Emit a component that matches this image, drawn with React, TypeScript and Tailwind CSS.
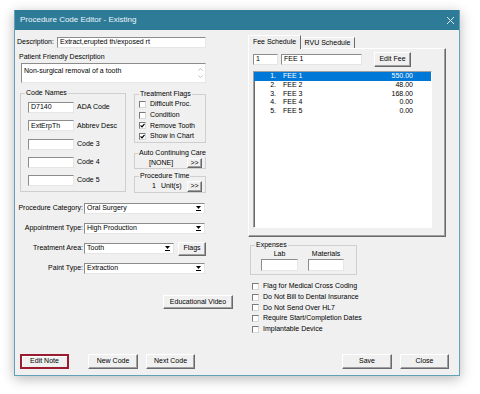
import React from "react";

const sunken =
  "bg-white border border-t-[#8c8c8c] border-l-[#8c8c8c] border-r-[#e6e6e6] border-b-[#e6e6e6]";
const raised =
  "bg-[#f0f0f0] border border-t-white border-l-white border-r-[#696969] border-b-[#696969] shadow-[inset_-1px_-1px_0_#a0a0a0]";

type Kids = { className?: string; children?: React.ReactNode };

function Field({ className = "", children }: Kids) {
  return (
    <div className={`${sunken} flex items-center pl-[2px] whitespace-nowrap overflow-hidden ${className}`}>
      {children}
    </div>
  );
}

function Btn({ className = "", children }: Kids) {
  return (
    <div className={`${raised} flex items-center justify-center whitespace-nowrap ${className}`}>
      {children}
    </div>
  );
}

function Select({ className = "", value }: { className?: string; value: string }) {
  return (
    <div className={`${sunken} h-[11px] flex items-center ${className}`}>
      <span className="flex-1 pl-[2px] whitespace-nowrap overflow-hidden">{value}</span>
      <span className="w-[9px] h-[9px] mr-[1px] flex flex-col items-center justify-center gap-[1px]">
        <svg width="5" height="3" viewBox="0 0 5 3">
          <path d="M0 0h5L2.5 3z" fill="#000" />
        </svg>
        <span className="w-[5px] h-px bg-black" />
      </span>
    </div>
  );
}

// group box: the caption sits on the top border line
function Group({ title, className = "", label = "ml-[4px]", children }: Kids & { title: string; label?: string }) {
  return (
    <div className={`flex flex-col border border-[#cfcfcf] ${className}`}>
      <span className={`${label} -mt-[5px] self-start px-[1px] h-[8px] leading-[8px] bg-[#f0f0f0] whitespace-nowrap`}>
        {title}
      </span>
      {children}
    </div>
  );
}

function Check({ label, checked = false }: { label: string; checked?: boolean }) {
  return (
    <div className="h-[10.75px] flex items-center whitespace-nowrap">
      <span className="w-[7px] h-[7px] shrink-0 bg-white border border-t-[#7a7a7a] border-l-[#7a7a7a] border-r-[#d8d8d8] border-b-[#d8d8d8] flex items-center justify-center">
        {checked && (
          <svg width="5" height="5" viewBox="0 0 5 5">
            <path d="M0.6 2.4 L2 3.8 L4.5 0.9" stroke="#000" strokeWidth="1.2" fill="none" />
          </svg>
        )}
      </span>
      <span className="ml-[4px]">{label}</span>
    </div>
  );
}

const codes = [
  ["D7140", "ADA Code"],
  ["ExtErpTh", "Abbrev Desc"],
  ["", "Code 3"],
  ["", "Code 4"],
  ["", "Code 5"],
];

const fees = [
  ["1.", "FEE 1", "550.00"],
  ["2.", "FEE 2", "48.00"],
  ["3.", "FEE 3", "168.00"],
  ["4.", "FEE 4", "0.00"],
  ["5.", "FEE 5", "0.00"],
];

const options = [
  "Flag for Medical Cross Coding",
  "Do Not Bill to Dental Insurance",
  "Do Not Send Over HL7",
  "Require Start/Completion Dates",
  "Implantable Device",
];

export default function App() {
  return (
    <div className="w-[480px] h-[394px] bg-white pl-[14px] pt-[10px] font-['Liberation_Sans',Arial,sans-serif] text-[7px] text-black">
      <div className="w-[446px] h-[366px] flex flex-col bg-[#f0f0f0] border-x border-b border-[#62a2b9] shadow-[0_3px_12px_rgba(0,0,0,0.28)]">
        <div className="h-[20px] shrink-0 bg-[#2e7b98] flex items-center justify-between pl-[5px] pr-[5px] text-[8px] text-[#eef5f8]">
          <span>Procedure Code Editor - Existing</span>
          <svg width="7" height="7" viewBox="0 0 7 7">
            <path d="M0 0L7 7M7 0L0 7" stroke="#dfeaf0" strokeWidth="1" />
          </svg>
        </div>

        <div className="flex-1 flex flex-col">
          <div className="flex-1 flex pl-[2px]">
            {/* left side */}
            <div className="w-[216px] flex flex-col">
              <div className="mt-[7px] h-[11px] flex items-center">
                <span className="w-[40px] whitespace-nowrap">Description:</span>
                <Field className="w-[149px] h-[11px]">Extract,erupted th/exposed rt</Field>
              </div>
              <div className="mt-[4px] h-[10px] leading-[10px] pl-[2px]">Patient Friendly Description</div>
              <div className={`${sunken} mt-[1px] ml-[4px] w-[185px] h-[20px] flex`}>
                <div className="flex-1 pl-[2px] pt-[2px] leading-[9px]">Non-surgical removal of a tooth</div>
                <div className="w-[9px] flex flex-col items-center justify-between py-[4px]">
                  <svg width="5" height="3" viewBox="0 0 5 3">
                    <path d="M0.5 2.5L2.5 0.5L4.5 2.5" stroke="#bdbdbd" fill="none" />
                  </svg>
                  <svg width="5" height="3" viewBox="0 0 5 3">
                    <path d="M0.5 0.5L2.5 2.5L4.5 0.5" stroke="#bdbdbd" fill="none" />
                  </svg>
                </div>
              </div>

              <div className="mt-[10px] flex items-start">
                <Group title="Code Names" className="ml-[3px] w-[106px] pb-[5px]">
                  <div className="mt-[5px] pl-[7px] flex flex-col gap-[7.25px]">
                    {codes.map(([value, label]) => (
                      <div key={label} className="h-[11px] flex items-center">
                        <Field className="w-[46px] h-[11px]">{value}</Field>
                        <span className="ml-[3px] whitespace-nowrap">{label}</span>
                      </div>
                    ))}
                  </div>
                </Group>

                <div className="ml-[8px] w-[72px] mt-[1px] flex flex-col">
                  <Group title="Treatment Flags">
                    <div className="mt-[1px] pl-[4px]">
                      <Check label="Difficult Proc." />
                      <Check label="Condition" />
                      <Check label="Remove Tooth" checked />
                      <Check label="Show in Chart" checked />
                    </div>
                  </Group>
                  <Group title="Auto Continuing Care" className="mt-[10px]" label="ml-[3px]">
                    <div className="mt-[1px] h-[10px] flex items-center pr-[3px]">
                      <span className="pl-[14px]">[NONE]</span>
                      <Btn className="ml-auto w-[15px] h-[10px]">&gt;&gt;</Btn>
                    </div>
                  </Group>
                  <Group title="Procedure Time" className="mt-[7px]">
                    <div className="mt-[1px] h-[11px] flex items-center pr-[3px]">
                      <span className="pl-[17px]">1</span>
                      <span className="ml-[5px]">Unit(s)</span>
                      <Btn className="ml-auto w-[15px] h-[11px]">&gt;&gt;</Btn>
                    </div>
                  </Group>
                </div>
              </div>

              <div className="mt-[10px] h-[11px] flex items-center">
                <div className="w-[66px] flex justify-end whitespace-nowrap">Procedure Category:</div>
                <Select className="ml-[1px] w-[121px]" value="Oral Surgery" />
              </div>
              <div className="mt-[9px] h-[11px] flex items-center">
                <div className="w-[66px] flex justify-end whitespace-nowrap">Appointment Type:</div>
                <Select className="ml-[1px] w-[121px]" value="High Production" />
              </div>
              <div className="mt-[9px] h-[11px] flex items-center">
                <div className="w-[66px] flex justify-end whitespace-nowrap">Treatment Area:</div>
                <Select className="ml-[1px] w-[90px]" value="Tooth" />
                <Btn className="ml-[4px] w-[28px] h-[14px] shrink-0">Flags</Btn>
              </div>
              <div className="mt-[9px] h-[11px] flex items-center">
                <div className="w-[66px] flex justify-end whitespace-nowrap">Paint Type:</div>
                <Select className="ml-[1px] w-[121px]" value="Extraction" />
              </div>

              <Btn className="mt-[21px] self-end w-[70px] h-[14px]">Educational Video</Btn>
            </div>

            {/* right side */}
            <div className="ml-[15px] w-[201px] flex flex-col">
              <div className="mt-[5px] h-[13px] flex items-end">
                <div className="relative z-10 -mb-px h-[14px] w-[53px] bg-[#f0f0f0] border-t border-l border-t-white border-l-white border-r border-r-[#696969] flex items-center justify-center whitespace-nowrap">
                  Fee Schedule
                </div>
                <div className="h-[11px] w-[54px] border-t border-t-white border-r border-r-[#696969] flex items-center justify-center whitespace-nowrap">
                  RVU Schedule
                </div>
              </div>

              <div className="w-[198px] h-[189px] pl-[4px] flex flex-col border border-t-white border-l-white border-r-[#696969] border-b-[#696969] shadow-[inset_-1px_-1px_0_#a0a0a0]">
                <div className="mt-[5px] h-[11px] flex items-center">
                  <Field className="w-[25px] h-[11px]">1</Field>
                  <Field className="ml-[3px] w-[81px] h-[11px]">FEE 1</Field>
                  <Btn className="ml-[12px] w-[37px] h-[15px] shrink-0">Edit Fee</Btn>
                </div>
                <div className="mt-[6px] w-[179px] h-[157px] bg-white border border-t-[#a0a0a0] border-l-[#a0a0a0] border-r-white border-b-white shadow-[inset_1px_1px_0_#696969]">
                  {fees.map(([n, name, amount], i) => (
                    <div
                      key={name}
                      className={`h-[8.75px] leading-[8.75px] flex whitespace-nowrap ${i === 0 ? "bg-[#0078d7] text-white" : ""}`}
                    >
                      <span className="w-[22px] text-right">{n}</span>
                      <span className="ml-[7px]">{name}</span>
                      <span className="ml-auto pr-[18px]">{amount}</span>
                    </div>
                  ))}
                </div>
              </div>

              <Group title="Expenses" className="mt-[8px] ml-[2px] w-[107px] pb-[3px]">
                <div className="flex pl-[10px]">
                  <div className="w-[37px] flex flex-col items-center">
                    <span className="h-[9px] leading-[9px]">Lab</span>
                    <Field className="mt-[1px] w-[37px] h-[12px]" />
                  </div>
                  <div className="ml-[10px] w-[36px] flex flex-col items-center">
                    <span className="h-[9px] leading-[9px]">Materials</span>
                    <Field className="mt-[1px] w-[36px] h-[12px]" />
                  </div>
                </div>
              </Group>

              <div className="mt-[6px] ml-[4px] flex flex-col">
                {options.map((o) => (
                  <Check key={o} label={o} />
                ))}
              </div>
            </div>
          </div>

          <div className="h-[15px] mb-[6px] shrink-0 flex pl-[5px] pr-[10px]">
            <Btn className="w-[49px] h-[15px] !border-2 !border-[#9b1c31] !shadow-[inset_1px_1px_0_white]">Edit Note</Btn>
            <Btn className="ml-[19px] w-[50px] h-[15px]">New Code</Btn>
            <Btn className="ml-[8px] w-[49px] h-[15px]">Next Code</Btn>
            <Btn className="ml-auto w-[50px] h-[15px]">Save</Btn>
            <Btn className="ml-[8px] w-[49px] h-[15px]">Close</Btn>
          </div>
        </div>
      </div>
    </div>
  );
}
